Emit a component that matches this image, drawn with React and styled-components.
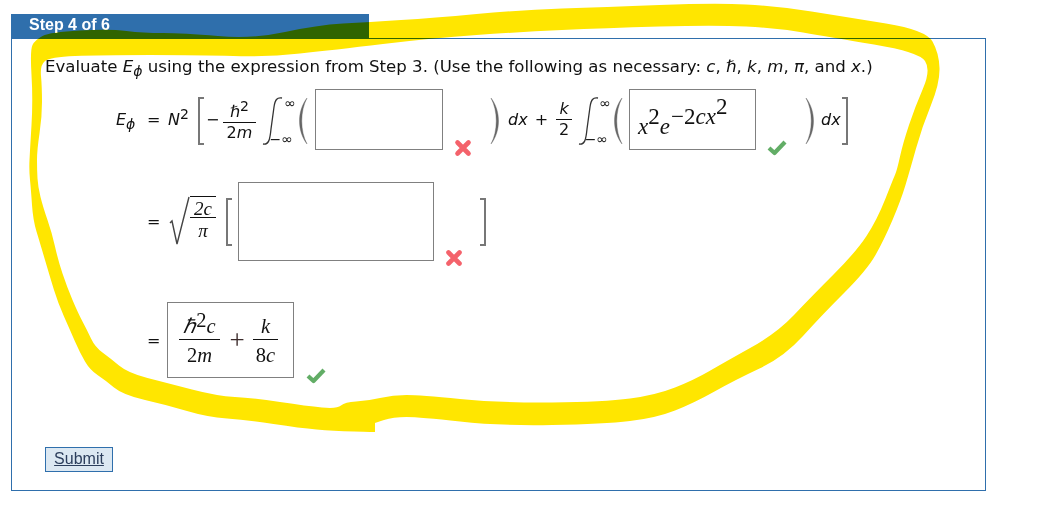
import React from 'react';
import styled, { createGlobalStyle } from 'styled-components';

const GlobalStyle = createGlobalStyle`
  html, body { margin: 0; padding: 0; background: #fff; }
  body { font-family: "DejaVu Sans", Verdana, sans-serif; color: #111; }
`;

const Page = styled.div`
  position: relative;
  width: 1043px;
  height: 510px;
  padding: 14px 0 0 11px;
  box-sizing: border-box;
  overflow: hidden;
`;

const Tab = styled.div`
  width: 358px;
  height: 25px;
  box-sizing: border-box;
  padding: 2px 0 0 18px;
  background: #2f6fac;
  color: #fff;
  font: bold 16px/18px "Liberation Sans", Arial, sans-serif;
`;

const Panel = styled.div`
  width: 975px;
  height: 453px;
  margin-top: -1px;
  box-sizing: border-box;
  padding: 17px 0 0 33px;
  border: 1px solid #2f6fac;
`;

const Prompt = styled.div`
  height: 22px;
  font-size: 16.6px;
  line-height: 22px;
  white-space: nowrap;
`;

const Row = styled.div`
  display: flex;
  align-items: center;
  height: ${(p) => p.$height}px;
  margin-top: ${(p) => p.$top}px;
  padding-left: ${(p) => p.$indent}px;
  font-size: 16px;
`;

const Var = styled.i`
  font-style: italic;
`;

const Sub = styled.sub`
  font-size: 14px;
  line-height: 0;
  vertical-align: -4px;
`;

const Sup = styled.sup`
  font-size: 14px;
  line-height: 0;
  vertical-align: 6px;
`;

const Item = styled.span`
  flex: none;
  margin-left: ${(p) => p.$left || 0}px;
  width: ${(p) => (p.$width ? `${p.$width}px` : 'auto')};
  white-space: nowrap;
`;

const Bracket = styled.span`
  flex: none;
  width: 6px;
  height: 48px;
  margin: 2px 0 0 ${(p) => p.$left || 0}px;
  box-sizing: border-box;
  border: 2px solid #777;
  border-width: 2px 0;
  ${(p) => (p.$close ? 'border-right-width: 2px;' : 'border-left-width: 2px;')}
`;

const Frac = styled.span`
  flex: none;
  display: inline-flex;
  flex-direction: column;
  align-items: center;
  width: ${(p) => p.$width}px;
  margin-left: ${(p) => p.$left || 0}px;
  margin-top: ${(p) => p.$lower || 0}px;
  font-size: ${(p) => p.$size || 16}px;
  line-height: ${(p) => p.$line || 20}px;
  ${(p) => p.$bar && 'border-top: 1px solid #111;'}
`;

const Denom = styled.span`
  align-self: stretch;
  text-align: center;
  border-top: 1px solid #111;
  padding-top: ${(p) => p.$pad || 0}px;
  padding-bottom: ${(p) => p.$bottom || 0}px;
`;

const Integral = styled.span`
  flex: none;
  display: grid;
  grid-template: 48px / ${(p) => p.$width}px;
  margin: 2px 0 0 ${(p) => p.$left || 0}px;
  font-size: 12px;
  line-height: 12px;
  svg, span { grid-area: 1 / 1; }
`;

const Upper = styled.span`
  justify-self: end;
  align-self: start;
  font-size: 14px;
`;

const Lower = styled.span`
  justify-self: end;
  align-self: end;
  margin-right: 3px;
  font-size: 14px;
`;

const AnswerBox = styled.div`
  flex: none;
  display: flex;
  align-items: center;
  box-sizing: border-box;
  width: ${(p) => p.$width}px;
  height: ${(p) => p.$height}px;
  margin-left: ${(p) => p.$left || 0}px;
  padding-left: ${(p) => p.$pad || 0}px;
  border: 1px solid #808080;
  font-family: "Liberation Serif", "Times New Roman", serif;
`;

const Mark = styled.svg`
  flex: none;
  align-self: flex-end;
  margin: 0 0 ${(p) => p.$drop}px ${(p) => p.$left}px;
`;

const Serif = styled.span`
  font-family: "Liberation Serif", "Times New Roman", serif;
  font-size: ${(p) => p.$size}px;
  font-style: ${(p) => (p.$roman ? 'normal' : 'italic')};
  margin-left: ${(p) => p.$left || 0}px;
  position: relative;
  top: ${(p) => p.$shift || 0}px;
`;

const Plus = styled.span`
  flex: none;
  width: 16px;
  margin-left: 9px;
  text-align: center;
  font-size: 27px;
  line-height: 26px;
  color: #3a2a2a;
`;

const SubmitButton = styled.button`
  display: block;
  width: 68px;
  height: 25px;
  margin-top: 69px;
  padding: 0 0 2px;
  background: #dce8f2;
  border: 1px solid #2f6fac;
  border-radius: 0;
  color: #2c3e5c;
  font: 16px "Liberation Sans", Arial, sans-serif;
  text-decoration: underline;
`;

const HighlightLayer = styled.svg`
  position: absolute;
  left: 0;
  top: 0;
  mix-blend-mode: multiply;
  pointer-events: none;
`;

const Paren = ({ left, close }) => (
  <Item as="svg" $left={left} width="10" height="48" viewBox="0 0 10 48" style={{ marginTop: 2 }}>
    <path
      d={close ? 'M1 1C11 14 11 34 1 47C8 34 8 14 1 1Z' : 'M9 1C-1 14 -1 34 9 47C2 34 2 14 9 1Z'}
      fill="#666"
      stroke="#666"
      strokeWidth="0.4"
    />
  </Item>
);

const IntegralSign = () => (
  <svg width="22" height="48" viewBox="0 0 22 48">
    <path d="M1 47C7 48 8 42 9 32L12 10C13 3 15 0 20 1" fill="none" stroke="#333" strokeWidth="1.3" />
  </svg>
);

const Cross = ({ left, drop }) => (
  <Mark $left={left} $drop={drop} width="18" height="18" viewBox="0 0 18 18">
    <path d="M3.5 3.5L14.5 14.5M14.5 3.5L3.5 14.5" stroke="#f4626b" strokeWidth="4.6" strokeLinecap="round" />
  </Mark>
);

const Check = ({ left, drop }) => (
  <Mark $left={left} $drop={drop} width="20" height="17" viewBox="0 0 20 17">
    <path d="M2 9L7.5 14L18 3" fill="none" stroke="#62ad66" strokeWidth="4.2" strokeLinejoin="round" />
  </Mark>
);

const Limits = ({ width, left }) => (
  <Integral $width={width} $left={left}>
    <IntegralSign />
    <Upper>∞</Upper>
    <Lower>−∞</Lower>
  </Integral>
);

// marker outline traced around the hand drawn loop, clockwise from the top left
const outer = [
  [30, 50], [35, 40], [50, 32], [110, 29], [143, 33], [183, 33], [253, 39], [317, 25], [369, 22], [433, 18],
  [520, 10], [604, 7], [715, 3], [777, 6], [846, 17], [926, 30], [939, 53], [940, 83], [922, 127], [910, 170],
  [901, 200], [884, 240], [867, 270], [822, 315], [784, 357], [735, 380], [694, 403], [656, 418], [604, 424],
  [500, 426], [420, 417], [393, 417], [375, 423], [375, 423], [375, 432], [375, 432], [333, 431], [300, 428],
  [247, 420], [207, 417], [167, 405], [123, 395], [105, 380], [90, 370], [80, 353], [70, 330], [58, 303],
  [50, 277], [40, 243], [33, 220], [31, 190], [29, 170], [30, 150], [33, 100],
];
const inner = [
  [37, 170], [37, 150], [42, 117], [42, 87], [40, 65], [50, 57], [100, 55], [200, 55], [267, 57], [333, 50],
  [433, 38], [520, 32], [604, 28], [715, 25], [777, 28], [829, 37], [919, 52], [931, 70], [915, 107], [903, 143],
  [897, 170], [894, 177], [877, 220], [856, 252], [811, 297], [777, 333], [725, 362], [694, 380], [656, 395],
  [604, 402], [500, 403], [420, 395], [393, 395], [367, 401], [345, 402], [337, 409], [307, 406], [253, 398],
  [217, 396], [167, 383], [128, 373], [110, 358], [95, 347], [87, 330], [78, 313], [67, 287], [58, 260],
  [52, 233], [43, 207], [38, 187],
];

// smooth closed outline through the midpoints of the traced points
const smooth = (pts) => {
  const mid = (a, b) => [(a[0] + b[0]) / 2, (a[1] + b[1]) / 2];
  const start = mid(pts[pts.length - 1], pts[0]);
  let d = `M${start[0]} ${start[1]}`;
  pts.forEach((p, i) => {
    const m = mid(p, pts[(i + 1) % pts.length]);
    d += `Q${p[0]} ${p[1]} ${m[0]} ${m[1]}`;
  });
  return `${d}Z`;
};

export default function App() {
  return (
    <Page>
      <GlobalStyle />
      <Tab>Step 4 of 6</Tab>
      <Panel>
        <Prompt>
          Evaluate <Var>E</Var><Sub><Var>ϕ</Var></Sub> using the expression from Step 3. (Use the following as necessary:{' '}
          <Var>c</Var>, <Var>ℏ</Var>, <Var>k</Var>, <Var>m</Var>, <Var>π</Var>, and <Var>x</Var>.)
        </Prompt>

        <Row $height={61} $top={11} $indent={71}>
          <Item $width={31}><Var>E</Var><Sub><Var>ϕ</Var></Sub></Item>
          <Item $width={21}>=</Item>
          <Item $width={30}><Var>N</Var><Sup>2</Sup></Item>
          <Bracket />
          <Item $left={2} $width={17}>−</Item>
          <Frac $width={33} $lower={6}>
            <span><Var>ℏ</Var><Sup>2</Sup></span>
            <Denom>2<Var>m</Var></Denom>
          </Frac>
          <Limits width={34} left={6} />
          <Paren left={2} />
          <AnswerBox $width={128} $height={61} $left={7} />
          <Cross left={11} drop={-7} />
          <Paren left={18} close />
          <Item $left={8}><Var>dx</Var></Item>
          <Item $left={7}>+</Item>
          <Frac $width={16} $left={8}>
            <Var>k</Var>
            <Denom>2</Denom>
          </Frac>
          <Limits width={33} left={6} />
          <Paren left={2} />
          <AnswerBox $width={127} $height={61} $left={6} $pad={8}>
            <Serif $size={23} $shift={7}>x</Serif>
            <Serif $size={23} $roman $shift={-3}>2</Serif>
            <Serif $size={23} $shift={7}>e</Serif>
            <Serif $size={23} $roman $shift={-3} $left={1}>−2</Serif>
            <Serif $size={23} $shift={-3}>cx</Serif>
            <Serif $size={23} $roman $shift={-13}>2</Serif>
          </AnswerBox>
          <Check left={11} drop={-6} />
          <Paren left={18} close />
          <Item $left={6}><Var>dx</Var></Item>
          <Bracket $close $left={1} />
        </Row>

        <Row $height={78} $top={32} $indent={102}>
          <Item $width={22}>=</Item>
          <svg width="21" height="50" viewBox="0 0 21 50">
            <path d="M1 27L3 25L8 48L20 1" fill="none" stroke="#444" strokeWidth="1.4" />
          </svg>
          <Frac $width={26} $size={19} $line={20} $bar>
            <Serif $size={19} $shift={2}>2c</Serif>
            <Denom $pad={2} $bottom={5}><Serif $size={19}>π</Serif></Denom>
          </Frac>
          <Bracket $left={10} />
          <AnswerBox $width={196} $height={79} $left={6} />
          <Cross left={11} drop={-7} />
          <Bracket $close $left={17} />
        </Row>

        <Row $height={76} $top={42} $indent={102}>
          <Item $width={20}>=</Item>
          <AnswerBox $width={127} $height={76} $pad={11}>
            <Frac $width={41} $size={20.5} $line={26}>
              <span><Serif $size={20.5}>ℏ</Serif><Serif $size={20.5} $roman $shift={-6}>2</Serif><Serif $size={20.5}>c</Serif></span>
              <Denom $pad={2}>2<Serif $size={20.5}>m</Serif></Denom>
            </Frac>
            <Plus>+</Plus>
            <Frac $width={25} $size={20.5} $line={26} $left={8}>
              <Serif $size={20.5}>k</Serif>
              <Denom $pad={2}>8<Serif $size={20.5}>c</Serif></Denom>
            </Frac>
          </AnswerBox>
          <Check left={12} drop={-6} />
        </Row>

        <SubmitButton>Submit</SubmitButton>
      </Panel>

      <HighlightLayer width="1043" height="510" viewBox="0 0 1043 510">
        <path d={smooth(outer) + smooth(inner)} fill="#ffe600" fillRule="evenodd" />
      </HighlightLayer>
    </Page>
  );
}
